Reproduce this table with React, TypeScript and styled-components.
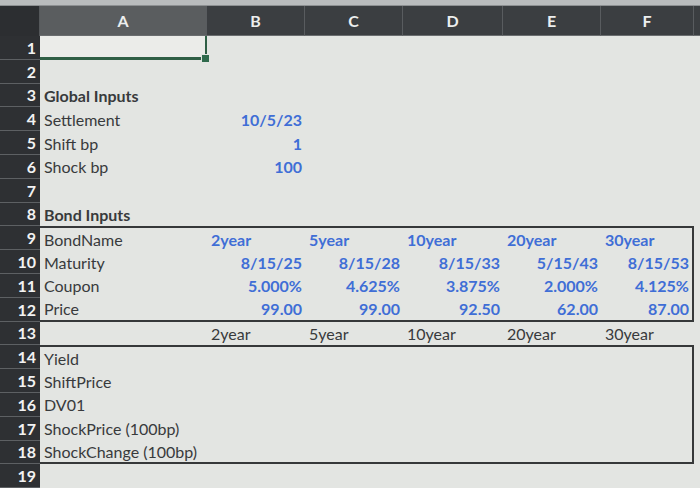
import React from 'react';
import styled, { createGlobalStyle, css } from 'styled-components';

const GlobalStyle = createGlobalStyle`
  html, body {
    margin: 0;
    padding: 0;
    background: #e3e5e2;
    overflow: hidden;
  }
  body {
    font-family: Lato, 'Open Sans', sans-serif;
  }
`;

type Cell = {
  text?: string;
  right?: boolean;
  bold?: boolean;
  blue?: boolean;
};

const COLS = ['A', 'B', 'C', 'D', 'E', 'F'];

const val = (text: string): Cell => ({ text, right: true, bold: true, blue: true });
const name = (text: string): Cell => ({ text, bold: true, blue: true });

const ROWS: Cell[][] = [
  [],
  [],
  [{ text: 'Global Inputs', bold: true }],
  [{ text: 'Settlement' }, val('10/5/23')],
  [{ text: 'Shift bp' }, val('1')],
  [{ text: 'Shock bp' }, val('100')],
  [],
  [{ text: 'Bond Inputs', bold: true }],
  [{ text: 'BondName' }, name('2year'), name('5year'), name('10year'), name('20year'), name('30year')],
  [{ text: 'Maturity' }, val('8/15/25'), val('8/15/28'), val('8/15/33'), val('5/15/43'), val('8/15/53')],
  [{ text: 'Coupon' }, val('5.000%'), val('4.625%'), val('3.875%'), val('2.000%'), val('4.125%')],
  [{ text: 'Price' }, val('99.00'), val('99.00'), val('92.50'), val('62.00'), val('87.00')],
  [{}, { text: '2year' }, { text: '5year' }, { text: '10year' }, { text: '20year' }, { text: '30year' }],
  [{ text: 'Yield' }],
  [{ text: 'ShiftPrice' }],
  [{ text: 'DV01' }],
  [{ text: 'ShockPrice (100bp)' }],
  [{ text: 'ShockChange (100bp)' }],
  [],
];

// boxed ranges (1-based row numbers)
const BOXES = [
  { from: 9, to: 12 },
  { from: 14, to: 18 },
];

const Sheet = styled.div`
  display: grid;
  grid-template-columns: 40px 167px 98px 98px 100px 98px 93px 1fr;
  grid-template-rows: 6px 30px repeat(19, 23.8px);
  width: 700px;
  height: 488px;
`;

const TopStrip = styled.div`
  grid-column: 1 / -1;
  background: #b9bcbd;
  border-bottom: 1px solid #8d9092;
`;

const Corner = styled.div`
  background: #2c2e31;
  border-right: 1px solid #55585b;
`;

const ColHeader = styled.div<{ $active?: boolean }>`
  display: flex;
  align-items: center;
  justify-content: center;
  background: ${({ $active }) => ($active ? '#5a5d5f' : '#3b3e41')};
  border-right: 1px solid #595c5f;
  border-bottom: 1px solid #6a6d6f;
  color: #eceeee;
  font-size: 16px;
  font-weight: 700;
`;

const RowHeader = styled.div`
  display: flex;
  align-items: center;
  justify-content: flex-end;
  padding-right: 4px;
  background: #2e3033;
  border-bottom: 1px solid #5d6063;
  color: #f2f2f2;
  font-size: 16px;
  font-weight: 700;
`;

const Data = styled.div<{
  $right?: boolean;
  $bold?: boolean;
  $blue?: boolean;
  $top?: boolean;
  $bottom?: boolean;
  $edge?: boolean;
  $selected?: boolean;
}>`
  position: relative;
  display: flex;
  align-items: center;
  justify-content: ${({ $right }) => ($right ? 'flex-end' : 'flex-start')};
  padding: 0 ${({ $right }) => ($right ? '3px' : '4px')};
  min-width: 0;
  white-space: nowrap;
  font-size: 16px;
  font-weight: ${({ $bold }) => ($bold ? 700 : 400)};
  color: ${({ $blue }) => ($blue ? '#3f6ed6' : '#383a3c')};
  box-sizing: border-box;
  ${({ $top }) => $top && css`border-top: 2px solid #363839;`}
  ${({ $bottom }) => $bottom && css`border-bottom: 2px solid #363839;`}
  ${({ $edge }) => $edge && css`border-right: 2px solid #363839;`}
  ${({ $selected }) =>
    $selected &&
    css`
      background: #ebece9;
      border-right: 2px solid #2f5f45;
      border-bottom: 3px solid #2f5f45;
    `}
`;

const Handle = styled.span`
  position: absolute;
  right: -5px;
  bottom: -6px;
  width: 7px;
  height: 7px;
  background: #2f6a4c;
  border: 1px solid #e3e5e2;
`;

export default function App() {
  return (
    <>
      <GlobalStyle />
      <Sheet>
        <TopStrip />
        <Corner />
        {COLS.map((c) => (
          <ColHeader key={c} $active={c === 'A'}>
            {c}
          </ColHeader>
        ))}
        <ColHeader />
        {ROWS.map((cells, i) => {
          const r = i + 1;
          const box = BOXES.find((b) => r >= b.from && r <= b.to);
          return (
            <React.Fragment key={r}>
              <RowHeader>{r}</RowHeader>
              {COLS.map((c, ci) => {
                const cell = cells[ci] || {};
                return (
                  <Data
                    key={c}
                    $right={cell.right}
                    $bold={cell.bold}
                    $blue={cell.blue}
                    $top={!!box && r === box.from}
                    $bottom={!!box && r === box.to}
                    $edge={!!box && c === 'F'}
                    $selected={r === 1 && c === 'A'}
                  >
                    {cell.text}
                    {r === 1 && c === 'A' && <Handle />}
                  </Data>
                );
              })}
              <Data />
            </React.Fragment>
          );
        })}
      </Sheet>
    </>
  );
}
